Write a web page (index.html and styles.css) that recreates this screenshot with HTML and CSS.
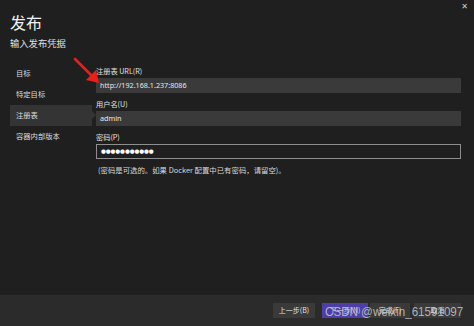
FILE: index.html
```html
<!DOCTYPE html>
<html lang="zh">
<head>
<meta charset="utf-8">
<title>发布</title>
<link rel="stylesheet" href="styles.css">
</head>
<body>
<div class="dialog">
  <div class="close">✕</div>
  <div class="header">
    <div class="title">发布</div>
    <div class="subtitle">输入发布凭据</div>
  </div>
  <div class="main">
    <div class="nav">
      <div class="nav-item">目标</div>
      <div class="nav-item">特定目标</div>
      <div class="nav-item selected">注册表</div>
      <div class="nav-item">容器内部版本</div>
    </div>
    <div class="form">
      <div class="field">
        <div class="label">注册表 URL(R)</div>
        <div class="input">http://192.168.1.237:8086</div>
      </div>
      <div class="field">
        <div class="label">用户名(U)</div>
        <div class="input">admin</div>
      </div>
      <div class="field">
        <div class="label">密码(P)</div>
        <div class="input password">●●●●●●●●●●●</div>
      </div>
      <div class="hint">(密码是可选的。如果 Docker 配置中已有密码，请留空)。</div>
    </div>
  </div>
  <div class="footer">
    <div class="btn b-prev">上一步(B)</div>
    <div class="btn primary b-next">下一步(N)</div>
    <div class="btn b-finish">完成(F)</div>
    <div class="btn b-cancel">取消</div>
  </div>
  <svg class="arrow" width="30" height="30" viewBox="0 0 30 30">
    <line x1="3" y1="3" x2="21" y2="21" stroke="#e5211d" stroke-width="2.6" stroke-linecap="round"/>
    <polygon points="27,27 14,24 24,14" fill="#e5211d"/>
  </svg>
  <div class="watermark">CSDN @weixin_61591097</div>
</div>
</body>
</html>
```

FILE: styles.css
```css
* { box-sizing: border-box; }
html, body {
  margin: 0;
  padding: 0;
  background: #1f1f1f;
}
body {
  width: 474px;
  height: 326px;
  overflow: hidden;
  font-family: "Noto Sans CJK SC", "Noto Sans", sans-serif;
  color: #e6e6e6;
}
.dialog {
  position: relative;
  width: 474px;
  height: 326px;
  display: flex;
  flex-direction: column;
}
.close {
  position: absolute;
  right: 6px;
  top: 1px;
  font-size: 8px;
  line-height: 12px;
  color: #d0d0d0;
  font-family: "DejaVu Sans", sans-serif;
}
.header {
  padding: 11px 10px 0 10px;
}
.title {
  font-size: 16px;
  line-height: 22px;
  color: #f2f2f2;
}
.subtitle {
  font-size: 9.3px;
  line-height: 13px;
  margin-top: 4px;
  color: #e0e0e0;
}
.main {
  display: flex;
  gap: 4px;
  padding: 13px 13px 0 10px;
  flex: 1;
}
.nav {
  width: 82px;
  display: flex;
  flex-direction: column;
}
.nav-item {
  position: relative;
  height: 21px;
  line-height: 21px;
  padding-left: 6px;
  font-size: 7.3px;
  color: #dcdcdc;
}
.nav-item.selected {
  background: #343434;
}
.nav-item.selected::after {
  content: "";
  position: absolute;
  right: -4px;
  top: 6px;
  border-left: 4px solid #343434;
  border-top: 4px solid transparent;
  border-bottom: 4px solid transparent;
}
.form {
  flex: 1;
  display: flex;
  flex-direction: column;
  padding-top: 1px;
}
.field {
  margin-bottom: 4px;
}
.label {
  font-size: 7.2px;
  line-height: 14px;
  color: #e0e0e0;
}
.input {
  height: 15px;
  line-height: 15px;
  background: #3a3a3a;
  padding-left: 4px;
  font-size: 7.2px;
  color: #e8e8e8;
  font-family: "Noto Sans", sans-serif;
}
.input.password {
  background: #1f1f1f;
  border: 1px solid #8e8e8e;
  line-height: 13px;
  font-family: "DejaVu Sans", sans-serif;
  font-size: 5.6px;
  letter-spacing: -0.1px;
  color: #ffffff;
}
.hint {
  margin-top: 1px;
  padding-left: 2px;
  font-size: 7.4px;
  line-height: 12px;
  color: #d8d8d8;
}
.footer {
  height: 31px;
  background: #2b2b2b;
  display: flex;
  justify-content: flex-end;
  align-items: flex-start;
  padding: 8px 13px 0 0;
  gap: 4px;
}
.btn {
  height: 15px;
  line-height: 15px;
  text-align: center;
  font-size: 7px;
  color: #e0e0e0;
  background: #3a3a3a;
}
.b-prev { width: 42px; margin-right: 3px; }
.b-next { width: 46px; margin-right: -2px; }
.b-finish { width: 40px; }
.b-cancel { width: 47px; }
.btn.primary {
  background: #4e3fa6;
  color: #d8d4f0;
}
.arrow {
  position: absolute;
  left: 72px;
  top: 56px;
}
.watermark {
  position: absolute;
  left: 325px;
  top: 302px;
  white-space: nowrap;
  font-family: "Liberation Sans", sans-serif;
  font-size: 13.5px;
  line-height: 20px;
  transform: scaleX(0.86);
  transform-origin: left center;
  color: rgba(200, 200, 200, 0.85);
}
```
